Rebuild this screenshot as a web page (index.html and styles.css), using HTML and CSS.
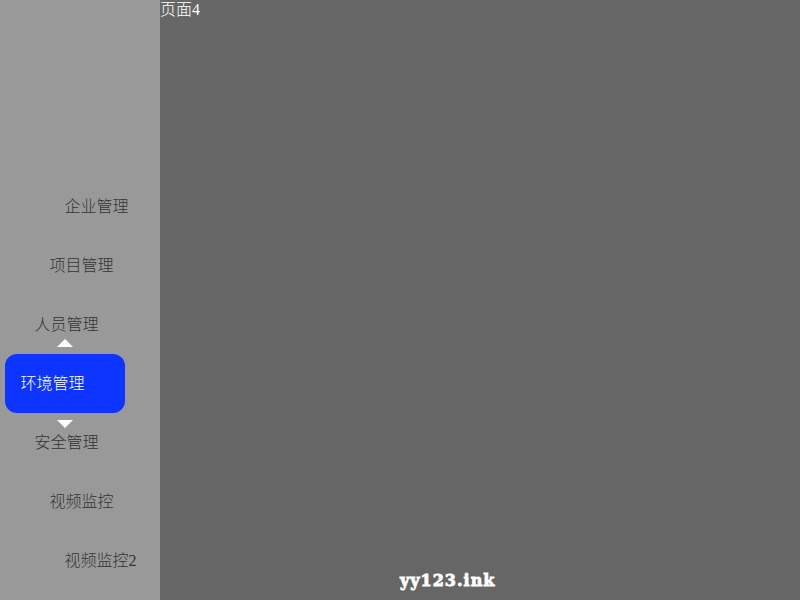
FILE: index.html
```html
<!DOCTYPE html>
<html lang="zh">
<head>
<meta charset="utf-8">
<title>页面4</title>
<link rel="stylesheet" href="styles.css">
</head>
<body>
<div class="app">
  <nav class="sidebar">
    <div class="item level-3">企业管理</div>
    <div class="item level-2">项目管理</div>
    <div class="item level-1">人员管理</div>
    <div class="item active">环境管理</div>
    <div class="item level-1">安全管理</div>
    <div class="item level-2">视频监控</div>
    <div class="item level-3">视频监控2</div>
  </nav>
  <main class="main">
    <div class="page">页面4</div>
    <div class="mark">yy123.ink</div>
  </main>
</div>
</body>
</html>
```
FILE: styles.css
```css
html, body {
  margin: 0;
  height: 100%;
  overflow: hidden;
}
body {
  font-family: "Liberation Serif", "Noto Sans CJK SC", serif;
  font-size: 16px;
  font-weight: 300;
  line-height: 18px;
}
.app {
  display: flex;
  width: 800px;
  height: 600px;
}
.sidebar {
  width: 160px;
  flex: none;
  box-sizing: border-box;
  padding-top: 177px;
  background: #999;
  color: #333;
  display: flex;
  flex-direction: column;
}
.item {
  height: 59px;
  line-height: 59px;
  white-space: nowrap;
}
.level-1 { padding-left: 34.6px; }
.level-2 { padding-left: 49.6px; }
.level-3 { padding-left: 64.6px; }
.active {
  position: relative;
  width: 120px;
  margin-left: 5px;
  box-sizing: border-box;
  padding-left: 15.6px;
  background: #0d35ff;
  border-radius: 12px;
  color: #fff;
}
.active::before,
.active::after {
  content: "";
  position: absolute;
  left: 52px;
  border-left: 8px solid transparent;
  border-right: 8px solid transparent;
}
.active::before {
  top: -15px;
  border-bottom: 8px solid #fff;
}
.active::after {
  bottom: -15px;
  border-top: 8px solid #fff;
}
.main {
  flex: 1;
  position: relative;
  background: #666;
  color: #fff;
}
.page {
  padding-top: 1px;
}
.mark {
  position: absolute;
  left: 240px;
  top: 571px;
  font-family: "DejaVu Serif", serif;
  font-weight: bold;
  font-size: 16px;
  letter-spacing: 1px;
  line-height: 20px;
  -webkit-text-stroke: 0.8px #fff;
}
```
